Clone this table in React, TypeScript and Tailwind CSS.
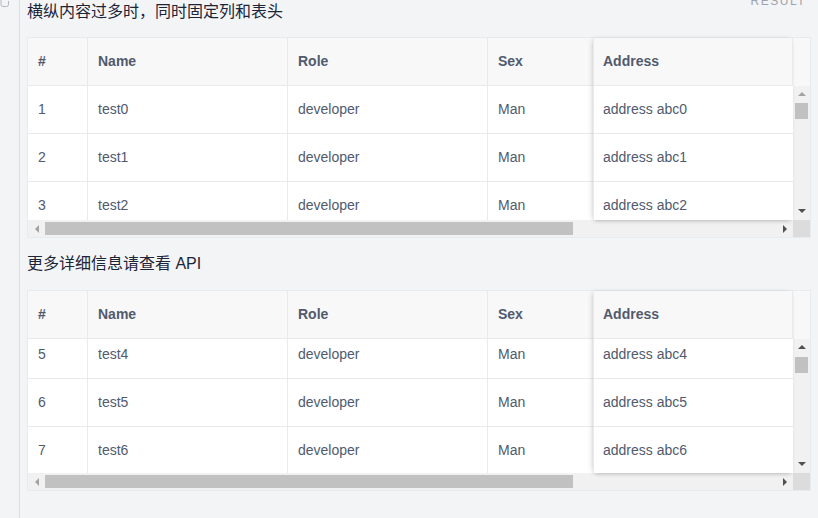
const font = "font-['Liberation_Sans','Noto_Sans_CJK_SC',sans-serif]";

type Row = { idx: number; name: string; role: string; sex: string; address: string };

function makeRows(from: number, to: number): Row[] {
  return Array.from({ length: to - from }, (_, i) => {
    const n = from + i;
    return { idx: n + 1, name: `test${n}`, role: 'developer', sex: 'Man', address: `address abc${n}` };
  });
}

// Triangular arrow buttons of the scrollbars
function Arrow({ dir, dark }: { dir: 'up' | 'down' | 'left' | 'right'; dark?: boolean }) {
  const c = dark ? 'border-[#505050]' : 'border-[#a3a3a3]';
  if (dir === 'up')
    return <div className={`h-0 w-0 border-x-[4px] border-b-[4px] border-x-transparent ${c}`} />;
  if (dir === 'down')
    return <div className={`h-0 w-0 border-x-[4px] border-t-[4px] border-x-transparent ${c}`} />;
  if (dir === 'left')
    return <div className={`h-0 w-0 border-y-[4px] border-r-[4px] border-y-transparent ${c}`} />;
  return <div className={`h-0 w-0 border-y-[4px] border-l-[4px] border-y-transparent ${c}`} />;
}

function VScroll({ upDark, thumbOffset }: { upDark?: boolean; thumbOffset: string }) {
  return (
    <div className="flex h-[134px] w-[17px] flex-col bg-[#f1f1f1]">
      <div className="flex h-[17px] items-center justify-center pb-[1px]">
        <Arrow dir="up" dark={upDark} />
      </div>
      <div className="flex-1 px-[2px]">
        <div className={`h-[16px] bg-[#c1c1c1] ${thumbOffset}`} />
      </div>
      <div className="flex h-[17px] items-center justify-center pb-[2px]">
        <Arrow dir="down" dark />
      </div>
    </div>
  );
}

function HScroll() {
  return (
    <div className="flex h-[17px]">
      <div className="flex w-[765px] bg-[#f1f1f1]">
        <div className="flex w-[17px] items-center justify-center pl-[1px]">
          <Arrow dir="left" />
        </div>
        <div className="flex-1 py-[2px]">
          <div className="h-full w-[528px] bg-[#c1c1c1]" />
        </div>
        <div className="flex w-[17px] items-center justify-center">
          <Arrow dir="right" dark />
        </div>
      </div>
      <div className="w-[17px] bg-[#dcdcdc]" />
    </div>
  );
}

const gridCols = 'grid grid-cols-[60px_200px_200px_200px_200px]';
const cell = 'flex items-center border-r border-[#e8eaec] px-[10px]';

function DataTable({ rows, offset, upDark, thumbOffset }: { rows: Row[]; offset: string; upDark?: boolean; thumbOffset: string }) {
  return (
    <div className="relative w-[784px] border border-[#e8eaec] bg-white text-[14px] text-[#515a6e]">
      <div className="flex">
        {/* scrolling viewport */}
        <div className="w-[765px] overflow-hidden">
          <div className={`${gridCols} h-[48px] w-max border-b border-[#e8eaec] bg-[#f8f8f9] font-bold`}>
            <div className={cell}>#</div>
            <div className={cell}>Name</div>
            <div className={cell}>Role</div>
            <div className={cell}>Sex</div>
            <div className={cell} />
          </div>
          <div className="h-[134px] overflow-hidden">
            <div className={offset}>
              {rows.map((r) => (
                <div key={r.idx} className={`${gridCols} h-[48px] w-max border-b border-[#e8eaec]`}>
                  <div className={cell}>{r.idx}</div>
                  <div className={cell}>{r.name}</div>
                  <div className={cell}>{r.role}</div>
                  <div className={cell}>{r.sex}</div>
                  <div className={cell} />
                </div>
              ))}
            </div>
          </div>
        </div>
        {/* header gutter + vertical scrollbar */}
        <div className="flex w-[17px] flex-col">
          <div className="h-[48px] bg-[#f8f8f9]" />
          <VScroll upDark={upDark} thumbOffset={thumbOffset} />
        </div>
      </div>
      <HScroll />

      {/* fixed right column */}
      <div className="absolute right-[17px] top-0 flex h-[182px] w-[200px] flex-col border-l border-[#e8eaec] bg-white shadow-[-2px_0_6px_-2px_rgba(0,0,0,0.2),0_3px_4px_-2px_rgba(0,0,0,0.18)]">
        <div className="flex h-[48px] items-center border-b border-r border-[#e8eaec] bg-[#f8f8f9] pl-[9px] font-bold">
          Address
        </div>
        <div className="h-[134px] overflow-hidden">
          <div className={offset}>
            {rows.map((r) => (
              <div key={r.idx} className="flex h-[48px] items-center border-b border-[#e8eaec] pl-[9px]">
                {r.address}
              </div>
            ))}
          </div>
        </div>
      </div>
    </div>
  );
}

export default function App() {
  return (
    <div className={`flex h-[518px] w-[818px] overflow-hidden bg-[#f3f4f6] ${font}`}>
      {/* left gutter */}
      <div className="relative w-[19px] overflow-hidden">
        <svg className="absolute left-0 top-[-4px]" width="9" height="12" viewBox="0 0 9 12" fill="none">
          <path d="M1 2v6.5a2 2 0 0 0 2 2h3.5a2 2 0 0 0 2-2V5" stroke="#b4b8bf" strokeWidth="1" />
        </svg>
      </div>
      <div className="w-px bg-[#dcdee2]" />

      {/* demo result area */}
      <div className="relative flex-1 pl-[7px]">
        <span className="absolute right-[12px] top-[-7px] text-[12px] leading-[16px] tracking-[1.5px] text-[#9ea3ab]">
          RESULT
        </span>

        <div className="mb-[13px] h-[24px] text-[16px] leading-[24px] text-[#1c2438]">
          横纵内容过多时，同时固定列和表头
        </div>
        <DataTable rows={makeRows(0, 3)} offset="" thumbOffset="" />

        <div className="mb-[14px] mt-[14px] h-[24px] text-[16px] leading-[24px] text-[#1c2438]">
          更多详细信息请查看 API
        </div>
        <DataTable rows={makeRows(4, 7)} offset="-mt-[8px]" upDark thumbOffset="mt-[1px]" />
      </div>
    </div>
  );
}
